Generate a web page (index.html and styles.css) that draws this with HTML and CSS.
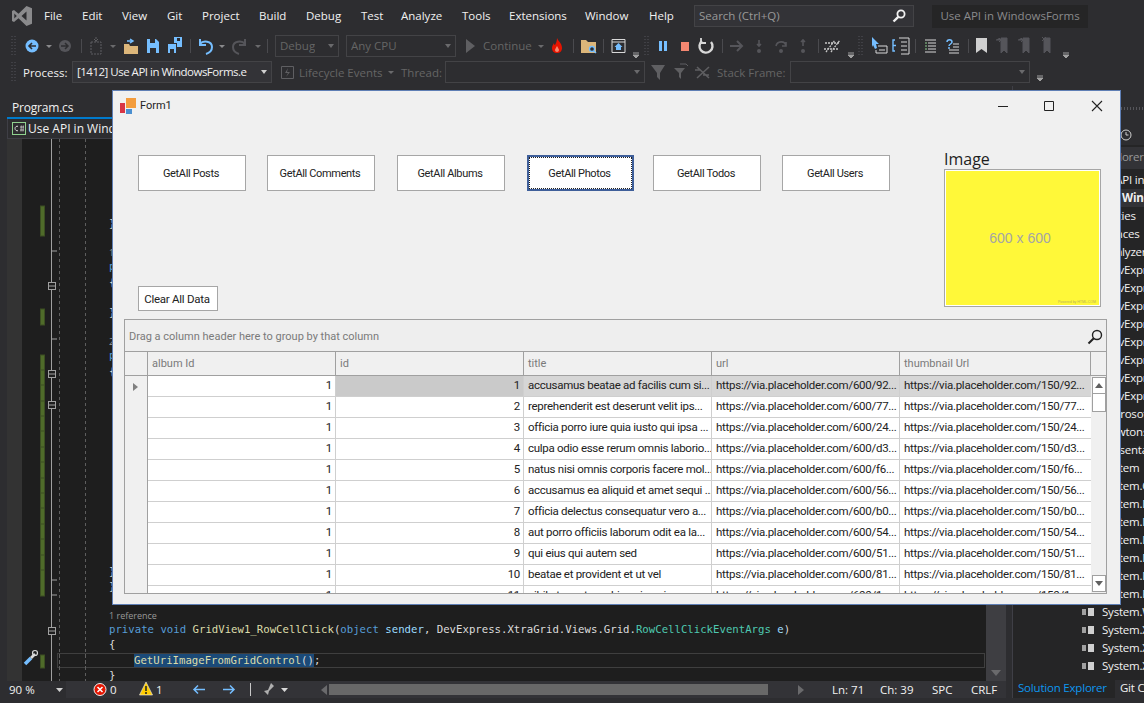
FILE: index.html
```html
<!DOCTYPE html>
<html lang="en">
<head>
<meta charset="utf-8">
<title>Use API in WindowsForms</title>
<link rel="stylesheet" href="styles.css">
</head>
<body>
<div class="shell">
  <header class="menubar">
    <svg class="logo" viewBox="0 0 20 20" width="20" height="20"><path fill="#8a8a8c" d="M14.5 0 20 2.3v15.4L14.5 20 6.5 12.3 2 16 0 15V5l2-1 4.500 3.700ZM14.500 5.500 9.500 10l5 4.500ZM2.300 7.500v5L4.800 10Z"/></svg>
    <nav class="menu"><span>File</span><span>Edit</span><span>View</span><span>Git</span><span>Project</span><span>Build</span><span>Debug</span><span>Test</span><span>Analyze</span><span>Tools</span><span>Extensions</span><span>Window</span><span>Help</span></nav>
    <div class="search"><span>Search (Ctrl+Q)</span>
      <svg viewBox="0 0 14 14" width="14" height="14"><circle cx="9" cy="5" r="3.600" fill="none" stroke="#f1f1f1" stroke-width="1.800"/><path d="M6.300 7.800 1.500 12.500" stroke="#f1f1f1" stroke-width="2.400"/></svg>
    </div>
    <div class="apptitle">Use API in WindowsForms</div>
  </header>

  <div class="toolbar">
    <svg class="tb-a" viewBox="10 32 265 28" width="265" height="28">
      <path d="M12 36v20M15 36v20" stroke="#55555a" stroke-dasharray="1 2"/>
      <circle cx="32" cy="46" r="6.500" fill="#75beff"/><path d="M36 46h-7m3-3-3 3 3 3" stroke="#2d2d30" stroke-width="1.600" fill="none"/>
      <path d="M46 45h6l-3 3z" fill="#8a8a8c"/>
      <circle cx="65" cy="46" r="6" fill="#55555a"/><path d="M61 46h7m-3-3 3 3-3 3" stroke="#2d2d30" stroke-width="1.500" fill="none"/>
      <path d="M81.500 39v14" stroke="#4a4a4e"/>
      <path d="M91 42h10v12H91z" fill="none" stroke="#5f5f62" stroke-dasharray="2 1"/><path d="M94 39l2 2 2-2M96 37v5" stroke="#5f5f62"/>
      <path d="M110 45h6l-3 3z" fill="#6a6a6c"/>
      <path d="M124 44h5l1 2h8v8h-14z" fill="#dcb67a"/><path d="M127 41h5m-2-2 3 2-3 2" stroke="#75beff" stroke-width="1.500" fill="none"/>
      <path d="M147 39h9l3 3v11h-12z" fill="#75beff"/><path d="M150 39h5v4h-5z" fill="#2d2d30"/><path d="M150 48h6v5h-6z" fill="#2d2d30"/>
      <path d="M168 44h8v9h-8z" fill="#75beff"/><path d="M174 37h8v10h-5v-4h-3z" fill="#75beff"/><path d="M170 49h4v4h-4z" fill="#2d2d30"/><path d="M177 38h3v3h-3z" fill="#2d2d30"/>
      <path d="M190.500 39v14" stroke="#4a4a4e"/>
      <path d="M200 39v6h6M200 44c3-4 12-3 12 3 0 4-3 6-6 7" fill="none" stroke="#75beff" stroke-width="2"/>
      <path d="M219 45h6l-3 3z" fill="#8a8a8c"/>
      <path d="M245 39v6h-6M245 44c-3-4-12-3-12 3 0 4 3 6 6 7" fill="none" stroke="#55555a" stroke-width="2"/>
      <path d="M255 45h6l-3 3z" fill="#6a6a6c"/>
      <path d="M267.500 39v14" stroke="#4a4a4e"/>
    </svg>
    <div class="combo dis w-debug"><span>Debug</span><i class="caret"></i></div>
    <div class="combo dis w-cpu"><span>Any CPU</span><i class="caret"></i></div>
    <svg class="tb-b" viewBox="456 32 27 28" width="27" height="28"><path d="M466 39l9 7-9 7z" fill="#5f5f62"/></svg>
    <span class="t-dis w-cont">Continue</span>
    <svg class="tb-c" viewBox="534 32 541 28" width="541" height="28">
      <path d="M538 45h6l-3 3z" fill="#6a6a6c"/>
      <path d="M557 38c1 3 5 5 5 10 0 3-2 5-5 5s-5-2-5-5c0-2 1-3 2-5 0 2 1 2 1 2 1-2 2-4 2-7z" fill="#e51400"/><path d="M557 46c1 2 2 3 2 4s-1 2-2 2-2-1-2-2 1-2 2-4z" fill="#f48771"/>
      <path d="M573.500 39v14" stroke="#4a4a4e"/>
      <path d="M581 40h5l2 2h8v11h-15z" fill="#dcb67a"/><circle cx="592" cy="49" r="2.500" fill="#2d2d30" stroke="#75beff" stroke-width="1.300"/><path d="M594 51l2 2" stroke="#75beff" stroke-width="1.400"/>
      <path d="M603.500 39v14" stroke="#4a4a4e"/>
      <path d="M612 39.500h13v13h-13z" fill="none" stroke="#d8d8d8"/><path d="M612 42h13" stroke="#d8d8d8"/><path d="M618.500 43l4 4h-1.500v3h-5v-3h-1.500z" fill="#75beff"/>
      <path d="M633 53h6M633 55l3 3 3-3z" stroke="#a0a0a0" fill="#a0a0a0"/>
      <path d="M645 36v20M648 36v20" stroke="#55555a" stroke-dasharray="1 2"/>
      <path d="M659 41h3v10h-3zM664 41h3v10h-3z" fill="#75beff"/>
      <path d="M681 42h8v9h-8z" fill="#f48771"/>
      <path d="M702 41a6.500 6.500 0 1 0 9 1" fill="none" stroke="#d8d8d8" stroke-width="2.400"/><path d="M701 38v5h5" fill="none" stroke="#d8d8d8" stroke-width="1.800"/>
      <path d="M722.500 39v14" stroke="#4a4a4e"/>
      <path d="M730 46h12m-5-5 5 5-5 5" stroke="#55555a" stroke-width="2" fill="none"/>
      <path d="M759 40v6m-2-2 2 2 2-2" stroke="#55555a" stroke-width="1.600" fill="none"/><circle cx="759" cy="51" r="2" fill="#55555a"/>
      <path d="M776 46c1-5 9-6 10 0m0-4v4h-4" stroke="#55555a" stroke-width="1.600" fill="none"/><circle cx="781" cy="51" r="2" fill="#55555a"/>
      <path d="M803 46v-6m-2 2 2-2 2 2" stroke="#55555a" stroke-width="1.600" fill="none"/><circle cx="803" cy="51" r="2" fill="#55555a"/>
      <path d="M818.500 39v14" stroke="#4a4a4e"/>
      <path d="M826 52l9-12M831 52l9-12M825 43h14M824 49h14" stroke="#c8c8c8" stroke-width="1.300" stroke-dasharray="2 1"/>
      <path d="M848 53h6M848 55l3 3 3-3z" stroke="#a0a0a0" fill="#a0a0a0"/>
      <path d="M859 36v20M862 36v20" stroke="#55555a" stroke-dasharray="1 2"/>
      <path d="M872 37l7 7h-3l1 4-2 1-2-4-1 2z" fill="#75beff"/><path d="M878 46h9v7h-11v-3M879 50h6" fill="none" stroke="#d8d8d8"/>
      <path d="M895 40h-2v11h2M893 45.500h3" fill="none" stroke="#75beff" stroke-width="1.400"/><path d="M899 38h10v16h-8M901 42h6M901 46h6M901 50h6" fill="none" stroke="#d8d8d8"/>
      <path d="M915.500 39v14" stroke="#4a4a4e"/>
      <path d="M925 40h11M928 43h8M928 46h8M928 49h8M925 52h11" stroke="#d8d8d8"/><path d="M925 43h2M925 46h2M925 49h2" stroke="#8fd18f"/>
      <path d="M947 42c0-3 5-3 5 0 0 2-3 2-3 4" fill="none" stroke="#75beff" stroke-width="1.500"/><circle cx="949" cy="48" r="1" fill="#75beff"/><path d="M953 44h6M953 47h6M949 50h10M949 53h10" stroke="#d8d8d8"/>
      <path d="M968.500 39v14" stroke="#4a4a4e"/>
      <path d="M976 38h11v15l-5.500-4-5.500 4z" fill="#d0d0d0"/>
      <path d="M1001 38h6v15l-3-3-3 3zM996 40h5l-2-2m2 2-2 2" fill="#55555a" stroke="#55555a"/>
      <path d="M1023 38h6v15l-3-3-3 3zM1018 40h5l-2-2m2 2-2 2" fill="#55555a" stroke="#55555a"/>
      <path d="M1044 38h6v15l-3-3-3 3zM1042 37l4 4m0-4-4 4" fill="#55555a" stroke="#55555a"/>
      <path d="M1063 53h6M1063 55l3 3 3-3z" stroke="#a0a0a0" fill="#a0a0a0"/>
    </svg>
  </div>

  <div class="toolbar row2">
    <svg viewBox="10 60 13 26" width="13" height="26"><path d="M12 62v21M15 62v21" stroke="#55555a" stroke-dasharray="1 2"/></svg>
    <span class="t-on w-proc">Process:</span>
    <div class="combo on w-pcombo"><span>[1412] Use API in WindowsForms.e</span><i class="caret"></i></div>
    <svg viewBox="272 60 27 26" width="27" height="26"><path d="M281.500 66.500h12v12h-12z" fill="none" stroke="#5f5f62"/><path d="M288 68l-3 5h3l-2 4 4-5h-3z" fill="#5f5f62"/></svg>
    <span class="t-dis w-life">Lifecycle Events</span>
    <svg viewBox="382 60 19 26" width="19" height="26"><path d="M388 71h6l-3 3z" fill="#6a6a6c"/></svg>
    <span class="t-dis w-thread">Thread:</span>
    <div class="combo dis w-thr"><span></span><i class="caret"></i></div>
    <svg viewBox="645 60 72 26" width="72" height="26">
      <path d="M651 65h14l-5 8v7l-3-3v-4z" fill="#5f5f62"/>
      <path d="M674 68h11l-4 5v6l-2-2v-4z" fill="#5f5f62"/><path d="M680 64h6l2 2" stroke="#5f5f62" fill="none"/>
      <path d="M697 67l12 11M709 67l-12 11M695 70h6M703 75h6" stroke="#5f5f62" stroke-width="1.600"/>
    </svg>
    <span class="t-dis w-stack">Stack Frame:</span>
    <div class="combo dis w-frame"><span></span><i class="caret"></i></div>
    <svg viewBox="1030 60 20 26" width="20" height="26"><path d="M1037 76h6M1037 78l3 3 3-3z" stroke="#a0a0a0" fill="#a0a0a0"/></svg>
  </div>

  <main class="workspace">
    <section class="doc">
      <div class="tabs"><span class="tab">Program.cs</span></div>
      <div class="crumb">
        <svg viewBox="0 0 14 13" width="14" height="13"><rect x=".5" y=".5" width="13" height="12" fill="#2d2d30" stroke="#8fd18f"/><path d="M6 4.300a2.300 2.300 0 1 0 0 4.400" fill="none" stroke="#d8d8d8"/><path d="M8 5h4M8 8h4M9.300 3.500 9 9.500M11.300 3.500l-.3 6" stroke="#d8d8d8" stroke-width=".7"/></svg>
        <span>Use API in WindowsForms</span>
      </div>
      <div class="editor">
        <svg class="gutter" viewBox="7 139 102 542" width="102" height="542">
          <rect x="7" y="139" width="15" height="542" fill="#333"/>
          <g fill="#4f6b2a" stroke="#3c4f22">
            <rect x="40.500" y="206" width="4" height="30"/>
            <rect x="40.500" y="309" width="4" height="16"/>
            <rect x="40.500" y="355" width="4" height="241"/>
            <rect x="40.500" y="655" width="4" height="13"/>
            <path d="M41 370h4M41 385h4M41 401h4M41 416h4M41 431h4M41 447h4M41 462h4M41 478h4M41 493h4M41 508h4M41 524h4M41 539h4M41 555h4M41 570h4" fill="none"/>
          </g>
          <path d="M51.500 139V681" stroke="#a0a0a0"/>
          <path d="M59.500 139V681M85.500 139V681" stroke="#5e5e5e" stroke-dasharray="3 3"/>
          <path d="M52 251h5M52 339h5M52 580h5M52 595h5" stroke="#a0a0a0"/>
          <g fill="#1e1e1e" stroke="#a0a0a0">
            <rect x="48.500" y="282.500" width="7" height="7"/>
            <rect x="48.500" y="370.500" width="7" height="7"/>
            <rect x="48.500" y="401.500" width="7" height="7"/>
            <rect x="48.500" y="627.500" width="7" height="7"/>
          </g>
          <path d="M49 286h6M49 374h6M49 405h6M49 631h6" stroke="#a0a0a0"/>
          <path d="M57 653.500h52M57 667.500h52M57.500 653v15" stroke="#3f3f3f" fill="none"/>
          <path d="M59.500 654V668M85.500 654V668" stroke="#5e5e5e" stroke-dasharray="3 3"/>
          <path d="M25 664l6-6" stroke="#75beff" stroke-width="3.500"/><path d="M31 658l4-4" stroke="#d8d8d8" stroke-width="2.600"/><circle cx="35" cy="653" r="2.500" fill="none" stroke="#d8d8d8" stroke-width="1.200"/>
        </svg>
        <div class="code">
          <div class="ln"><span class="tx">}</span></div>
          <div class="ln"></div>
          <div class="lens">1 reference</div>
          <div class="ln"><span class="kw">private void</span> <span class="fn">GetAllPosts_Click</span><span class="tx">(</span><span class="kw">object</span> <span class="pr">sender</span><span class="tx">, EventArgs e)</span></div>
          <div class="ln"><span class="tx">{</span></div>
          <div class="ln"></div>
          <div class="ln"><span class="tx">}</span></div>
          <div class="ln"></div>
          <div class="lens">2 references</div>
          <div class="ln"><span class="kw">private void</span> <span class="fn">GetUriImageFromGridControl</span><span class="tx">()</span></div>
          <div class="ln"><span class="tx">{</span></div>
          <div class="ln"></div><div class="ln"></div><div class="ln"></div><div class="ln"></div><div class="ln"></div><div class="ln"></div>
          <div class="ln"></div><div class="ln"></div><div class="ln"></div><div class="ln"></div><div class="ln"></div><div class="ln"></div>
          <div class="ln"><span class="tx">}</span></div>
          <div class="ln"><span class="tx">}</span></div>
          <div class="ln"></div>
          <div class="lens">1 reference</div>
          <div class="ln"><span class="kw">private void</span> <span class="fn">GridView1_RowCellClick</span><span class="tx">(</span><span class="kw">object</span> <span class="pr">sender</span><span class="tx">, DevExpress.XtraGrid.Views.Grid.</span><span class="ty">RowCellClickEventArgs</span> <span class="pr">e</span><span class="tx">)</span></div>
          <div class="ln"><span class="tx">{</span></div>
          <div class="ln cur"><span class="indent"></span><span class="sel"><span class="fn">GetUriImageFromGridControl</span><span class="tx">()</span></span><span class="tx">;</span></div>
          <div class="ln"><span class="tx">}</span></div>
        </div>
        <div class="vscroll"><svg viewBox="0 0 20 8" width="20" height="8"><path d="M5 1h10l-5 6z" fill="#6a6a6c"/></svg></div>
      </div>
      <footer class="status">
        <div class="zoomc"><span>90 %</span><svg viewBox="0 0 7 4" width="7" height="4"><path d="M0 0h7L3.500 4z" fill="#d0d0d0"/></svg></div>
        <svg viewBox="66 681 44 17" width="44" height="17">
          <circle cx="100" cy="689.500" r="6" fill="#e51400" stroke="#f1f1f1"/><path d="M97.500 687l5 5m0-5-5 5" stroke="#fff" stroke-width="1.500"/>
        </svg>
        <span class="st w-zero">0</span>
        <svg viewBox="138 681 18 17" width="18" height="17">
          <path d="M146 682l6.500 13h-13z" fill="#ffcc00" stroke="#f1f1f1" stroke-width=".6"/><path d="M146 686v5M146 692v2" stroke="#1e1e1e" stroke-width="1.500"/>
        </svg>
        <span class="st w-one">1</span>
        <svg viewBox="170 681 150 17" width="150" height="17">
          <path d="M205 689.500h-11m4-4-4 4 4 4" fill="none" stroke="#75beff" stroke-width="1.500"/>
          <path d="M223 689.500h11m-4-4 4 4-4 4" fill="none" stroke="#75beff" stroke-width="1.500"/>
          <path d="M250.500 683v13" stroke="#c8c8c8"/>
          <path d="M271 683l3 3-5 5-1 4-3-3-1-1 4-1z" fill="#b0b0b0"/><path d="M281 688h7l-3.500 4z" fill="#d8d8d8"/>
        </svg>
        <svg viewBox="0 0 8 10" width="8" height="10" class="hl"><path d="M7 0v10L1 5z" fill="#6a6a6c"/></svg>
        <div class="hthumb"></div>
        <svg viewBox="0 0 8 10" width="8" height="10" class="hr"><path d="M1 0v10l6-5z" fill="#6a6a6c"/></svg>
        <span class="st w-ln">Ln: 71</span><span class="st w-ch">Ch: 39</span><span class="st w-spc">SPC</span><span class="st">CRLF</span>
      </footer>
    </section>

    <aside class="panel">
      <div class="ptitle"><div class="pgrip"></div><svg viewBox="0 0 12 12" width="12" height="12"><circle cx="6" cy="6" r="5" fill="none" stroke="#d0d0d0"/><path d="M6 3v3h2.500" fill="none" stroke="#d0d0d0"/></svg></div>
      <div class="psearch">Search Solution Explorer</div>
      <div class="tree">
        <div class="r l0">Solution 'Use API in WindowsForms'</div>
        <div class="r l1 cur-r">Use API in WindowsForms</div>
        <div class="r l2">Properties</div>
        <div class="r l2">References</div>
        <div class="r l3">Analyzers</div>
        <div class="r l3 dx">DevExpress.BonusSkins</div>
        <div class="r l3 dx">DevExpress.Data</div>
        <div class="r l3 dx">DevExpress.Printing</div>
        <div class="r l3 dx">DevExpress.Sparkline</div>
        <div class="r l3 dx">DevExpress.Utils</div>
        <div class="r l3 dx">DevExpress.XtraBars</div>
        <div class="r l3 dx">DevExpress.XtraEditors</div>
        <div class="r l3 dx">DevExpress.XtraGrid</div>
        <div class="r l3">Microsoft.CSharp</div>
        <div class="r l3">Newtonsoft.Json</div>
        <div class="r l3">PresentationCore</div>
        <div class="r l3">System</div>
        <div class="r l3">System.Core</div>
        <div class="r l3">System.Data</div>
        <div class="r l3">System.Deployment</div>
        <div class="r l3">System.Design</div>
        <div class="r l3">System.Drawing</div>
        <div class="r l3">System.Net.Http</div>
        <div class="r l3">System.Runtime</div>
        <div class="r l3 ref">System.Windows</div>
        <div class="r l3 ref">System.Xaml</div>
        <div class="r l3 ref">System.Xml</div>
        <div class="r l3 ref">System.Xml.Linq</div>
      </div>
      <div class="ptabs"><span class="pt active">Solution Explorer</span><span class="pt">Git Changes</span></div>
    </aside>
  </main>
</div>

<div class="form">
  <div class="ftitle">
    <svg viewBox="0 0 16 16" width="16" height="16"><rect x="0" y="5" width="5" height="10" fill="#d83545"/><rect x="6" y="0" width="10" height="10" fill="#f39c3d"/><rect x="6" y="11" width="6" height="5" fill="#4a8fd0"/></svg>
    <span class="fname">Form1</span>
    <svg class="wbtn" viewBox="0 0 112 12" width="112" height="12"><path d="M0 6.500h10" stroke="#222"/><path d="M46.500 1.500h9v9h-9z" fill="none" stroke="#222"/><path d="M94 1l10 10m0-10L94 11" stroke="#222" stroke-width="1.100"/></svg>
  </div>
  <div class="fmain">
    <div class="fleft">
      <div class="btns">
        <button class="btn">GetAll Posts</button>
        <button class="btn">GetAll Comments</button>
        <button class="btn">GetAll Albums</button>
        <button class="btn focus">GetAll Photos</button>
        <button class="btn">GetAll Todos</button>
        <button class="btn">GetAll Users</button>
      </div>
      <button class="btn clear">Clear All Data</button>
    </div>
    <div class="fimg">
      <div class="imglabel">Image</div>
      <div class="imgbox"><div class="yellow"><span>600 x 600</span><small>Powered by HTML.COM</small></div></div>
    </div>
  </div>
  <div class="grid">
    <div class="group"><span>Drag a column header here to group by that column</span>
      <svg viewBox="0 0 16 16" width="16" height="16"><circle cx="10" cy="6" r="4.500" fill="none" stroke="#222" stroke-width="1.400"/><path d="M6.800 9.200 1.500 14.500" stroke="#222" stroke-width="2"/></svg>
    </div>
    <div class="ghead"><span></span><span>album Id</span><span>id</span><span>title</span><span>url</span><span>thumbnail Url</span><span></span></div>
    <div class="gbody">
      <table class="tbl">
        <tbody>
          <tr class="selrow"><th><svg viewBox="0 0 5 8" width="5" height="8"><path d="M0 0l5 4-5 4z" fill="#808080"/></svg></th><td class="n first">1</td><td class="n focus-c">1</td><td>accusamus beatae ad facilis cum si...</td><td class="u">https://via.placeholder.com/600/92...</td><td class="u">https://via.placeholder.com/150/92...</td></tr>
          <tr><th></th><td class="n">1</td><td class="n">2</td><td>reprehenderit est deserunt velit ips...</td><td class="u">https://via.placeholder.com/600/77...</td><td class="u">https://via.placeholder.com/150/77...</td></tr>
          <tr><th></th><td class="n">1</td><td class="n">3</td><td>officia porro iure quia iusto qui ipsa ...</td><td class="u">https://via.placeholder.com/600/24...</td><td class="u">https://via.placeholder.com/150/24...</td></tr>
          <tr><th></th><td class="n">1</td><td class="n">4</td><td>culpa odio esse rerum omnis laborio...</td><td class="u">https://via.placeholder.com/600/d3...</td><td class="u">https://via.placeholder.com/150/d3...</td></tr>
          <tr><th></th><td class="n">1</td><td class="n">5</td><td>natus nisi omnis corporis facere mol...</td><td class="u">https://via.placeholder.com/600/f6...</td><td class="u">https://via.placeholder.com/150/f6...</td></tr>
          <tr><th></th><td class="n">1</td><td class="n">6</td><td>accusamus ea aliquid et amet sequi ...</td><td class="u">https://via.placeholder.com/600/56...</td><td class="u">https://via.placeholder.com/150/56...</td></tr>
          <tr><th></th><td class="n">1</td><td class="n">7</td><td>officia delectus consequatur vero a...</td><td class="u">https://via.placeholder.com/600/b0...</td><td class="u">https://via.placeholder.com/150/b0...</td></tr>
          <tr><th></th><td class="n">1</td><td class="n">8</td><td>aut porro officiis laborum odit ea la...</td><td class="u">https://via.placeholder.com/600/54...</td><td class="u">https://via.placeholder.com/150/54...</td></tr>
          <tr><th></th><td class="n">1</td><td class="n">9</td><td>qui eius qui autem sed</td><td class="u">https://via.placeholder.com/600/51...</td><td class="u">https://via.placeholder.com/150/51...</td></tr>
          <tr><th></th><td class="n">1</td><td class="n">10</td><td>beatae et provident et ut vel</td><td class="u">https://via.placeholder.com/600/81...</td><td class="u">https://via.placeholder.com/150/81...</td></tr>
          <tr><th></th><td class="n">1</td><td class="n">11</td><td>nihil at amet non hic quia qui</td><td class="u">https://via.placeholder.com/600/1e...</td><td class="u">https://via.placeholder.com/150/1e...</td></tr>
        </tbody>
      </table>
      <div class="gscroll">
        <div class="sbtn"><svg viewBox="0 0 8 5" width="8" height="5"><path d="M4 0l4 5H0z" fill="#606060"/></svg></div>
        <div class="sthumb"></div>
        <div class="strack"></div>
        <div class="sbtn"><svg viewBox="0 0 8 5" width="8" height="5"><path d="M0 0h8L4 5z" fill="#606060"/></svg></div>
      </div>
    </div>
  </div>
</div>
</body>
</html>
```

FILE: styles.css
```css
* { box-sizing: border-box; }
html, body { margin: 0; height: 100%; overflow: hidden; }
body { width: 1144px; height: 703px; background: #2d2d30; font: 12px "Open Sans", "Noto Sans", sans-serif; color: #f1f1f1; position: relative; }
svg { display: block; flex: none; }
.shell { display: flex; flex-direction: column; height: 703px; }

.menubar { display: flex; align-items: center; height: 32px; flex: none; padding-left: 12px; }
.logo { margin-right: 12px; }
.menu { display: grid; grid-template-columns: 38px 40px 45px 35px 57px 47px 55px 40px 61px 47px 76px 64px 45px; font-size: 11.500px; padding-bottom: 2px; }
.search { display: flex; align-items: center; justify-content: space-between; width: 220px; height: 22px; background: #333337; border: 1px solid #434346; padding: 0 7px 0 4px; color: #999; font-size: 11.500px; }
.search span { padding-bottom: 2px; }
.apptitle { margin-left: 18px; width: 156px; height: 23px; line-height: 21px; background: #252526; color: #8a8a8c; text-align: center; font-size: 11.500px; }

.toolbar { display: flex; align-items: center; height: 28px; flex: none; padding-left: 10px; font-size: 11.500px; }
.row2 { height: 26px; }
.row2 > .combo, .row2 > span { margin-bottom: 2px; }
.combo { display: flex; align-items: center; justify-content: space-between; height: 22px; border: 1px solid #434346; padding: 0 4px 0 4px; overflow: hidden; white-space: nowrap; }
.combo.dis { color: #656565; }
.combo.on { background: #333337; color: #f1f1f1; letter-spacing: -.5px; }
.combo span { overflow: hidden; padding-bottom: 2px; }
.caret { flex: none; width: 0; height: 0; border: 3px solid transparent; border-top: 4px solid #6a6a6c; border-bottom: 0; }
.on .caret { border-top-color: #d0d0d0; }
.w-debug { width: 64px; margin-right: 7px; }
.w-cpu { width: 110px; }
.w-cont { width: 51px; padding-bottom: 2px; }
.t-dis { color: #656565; white-space: nowrap; }
.t-on { color: #f1f1f1; }
.w-proc { width: 49px; }
.w-pcombo { width: 200px; }
.w-life { width: 83px; }
.w-thread { width: 44px; }
.w-thr { width: 200px; }
.w-stack { width: 73px; }
.w-frame { width: 240px; }

.workspace { display: flex; height: 612px; flex: none; }
.doc { display: flex; flex-direction: column; width: 999px; margin-left: 7px; flex: none; }
.tabs { height: 33px; display: flex; align-items: flex-end; border-bottom: 2px solid #007acc; flex: none; }
.tab { padding: 0 5px 1px 5px; font-size: 12px; letter-spacing: -.2px; }
.crumb { height: 20px; display: flex; align-items: center; gap: 2px; padding-left: 4px; background: #2d2d30; border: 1px solid #3f3f46; border-top: 0; flex: none; white-space: nowrap; font-size: 12px; }
.editor { display: flex; flex: 1; min-height: 0; background: #1e1e1e; overflow: hidden; }
.gutter { flex: none; }
.code { flex: 1; min-width: 0; display: flex; flex-direction: column; justify-content: flex-end; margin-bottom: -2px; font: 10.680px/15.400px "DejaVu Sans Mono", "Liberation Mono", monospace; white-space: pre; }
.ln { height: 15.400px; flex: none; padding-left: 0; }
.lens { height: 12px; line-height: 12px; flex: none; font: 9px/12px "Open Sans", sans-serif; color: #999; }
.cur { height: 15px; border: 1px solid #3f3f3f; border-left: 0; line-height: 13px; margin-right: 1px; }
.indent { display: inline-block; width: 25px; }
.sel { background: #1b4a78; display: inline-block; height: 13px; }
.kw { color: #569cd6; }
.fn { color: #dcdcaa; }
.tx { color: #dcdcdc; }
.pr { color: #9cdcfe; }
.ty { color: #4ec9b0; }
.vscroll { width: 20px; flex: none; background: #3e3e42; display: flex; align-items: flex-end; padding-bottom: 4px; }

.status { height: 17px; flex: none; display: flex; align-items: center; background: #333337; font-size: 11.500px; white-space: nowrap; }
.zoomc { width: 59px; height: 17px; background: #2d2d30; display: flex; align-items: center; justify-content: space-between; padding-left: 2px; padding-right: 3px; flex: none; }
.hl { margin-right: 1px; }
.hthumb { width: 439px; height: 11px; background: #686868; flex: none; }
.hr { margin-left: 29px; margin-right: 27px; }
.st { flex: none; padding-bottom: 1px; }
.w-zero { width: 28px; }
.w-one { width: 14px; }
.w-ln { width: 48px; }
.w-ch { width: 52px; }
.w-spc { width: 39px; }

.panel { width: 132px; margin-left: 6px; flex: none; background: #252526; border-left: 1px solid #3f3f46; display: flex; flex-direction: column; overflow: hidden; white-space: nowrap; font-size: 11.500px; letter-spacing: -.2px; }
.ptitle { height: 59px; flex: none; display: flex; flex-direction: column; justify-content: flex-end; padding: 0 0 4px 107px; background: #2d2d30; position: relative; }
.pgrip { position: absolute; left: 108px; right: 0; top: 21px; height: 3px; background: repeating-linear-gradient(90deg, #55555a 0 1px, transparent 1px 3px); }
.psearch { height: 22px; flex: none; line-height: 20px; padding-left: 4px; background: #333337; color: #999; margin-top: 2px; }
.tree { flex: 1; min-height: 0; padding-top: 2px; overflow: hidden; }
.r { height: 18px; line-height: 17px; position: relative; }
.l0 { padding-left: 32px; }
.l1 { padding-left: 51px; font-weight: 700; }
.cur-r { background: #333337; }
.l2 { padding-left: 69px; }
.l3 { padding-left: 89px; }
.l3.dx { padding-left: 91px; }
.ref::before { content: ""; position: absolute; left: 69px; top: 6px; width: 4px; height: 6px; background: #a0a0a0; box-shadow: 7px 0 0 1px #d0d0d0; }
.ptabs { height: 18px; flex: none; display: flex; margin-top: auto; }
.pt { padding: 0 5px; line-height: 16px; background: #2d2d30; border-right: 1px solid #3f3f46; }
.pt.active { background: #252526; color: #0e97f0; border-right: 0; padding-right: 8px; }

.form { position: absolute; left: 112px; top: 90px; width: 1009px; height: 515px; background: #f0f0f0; border: 1px solid #5f7fb5; color: #1e1e1e; display: flex; flex-direction: column; font-family: Roboto, "Open Sans", sans-serif; font-size: 11px; overflow: hidden; }
.ftitle { height: 30px; flex: none; display: flex; align-items: center; padding-left: 7px; gap: 4px; }
.fname { color: #222; flex: 1; font-size: 11px; padding-bottom: 1px; }
.wbtn { margin-right: 10px; }
.fmain { display: flex; height: 191px; flex: none; padding-left: 25px; padding-top: 29px; }
.fleft { width: 806px; flex: none; padding-top: 5px; }
.btns { display: grid; grid-template-columns: 129px 130px 130px 126px 129px 108px; }
.btn { width: 108px; height: 36px; background: #fff; border: 1px solid #a6a6a6; font: inherit; letter-spacing: -.35px; color: #222; padding: 0 2px 0 0; border-radius: 0; display: block; }
.btn.focus { width: 107px; border: 2px solid #3f5f9a; outline: 1px dotted #222; outline-offset: -3px; }
.clear { width: 80px; height: 25px; margin-top: 95px; font-size: 11.500px; letter-spacing: -.25px; }
.fimg { width: 157px; flex: none; }
.imglabel { height: 19px; font: 16px/18px "Open Sans", sans-serif; }
.imgbox { height: 138px; border: 1px solid #a6a6a6; background: #fff; padding: 1px; }
.yellow { height: 134px; background: #fff839; position: relative; display: flex; align-items: center; justify-content: center; color: #a5a5a5; font: 14px "Liberation Sans", sans-serif; padding-right: 5px; }
.yellow small { position: absolute; right: 3px; bottom: 1px; font-size: 3.500px; color: #b9b25e; }

.grid { margin-left: 11px; margin-top: 7px; width: 983px; height: 275px; border: 1px solid #a0a0a0; background: #eee; overflow: hidden; flex: none; display: flex; flex-direction: column; }
.group { height: 32px; flex: none; display: flex; align-items: center; justify-content: space-between; padding: 2px 3px 0 4px; color: #7a7a7a; font-size: 11px; border-bottom: 1px solid #a0a0a0; }
.ghead { height: 24px; flex: none; display: grid; grid-template-columns: 23px 188px 188px 188px 188px 191px 15px; background: #f0f0f0; color: #7a7a7a; line-height: 23px; border-bottom: 1px solid #a0a0a0; font-size: 11px; }
.ghead span { padding-left: 4px; border-right: 1px solid #a0a0a0; }
.ghead span:last-child { border-right: 0; }
.gbody { display: flex; flex: 1; min-height: 0; }
.tbl { table-layout: fixed; width: 966px; border-collapse: separate; border-spacing: 0; flex: none; height: 231px; }
.tbl th { width: 23px; background: #f0f0f0; border-right: 1px solid #a0a0a0; padding: 0 0 0 8px; font-weight: 400; }
.tbl td { width: 188px; height: 21px; padding: 0 0 2px 4px; background: #fff; border-right: 1px solid #cfcfcf; border-bottom: 1px solid #cfcfcf; white-space: nowrap; overflow: hidden; color: #222; font-size: 11.500px; letter-spacing: -.28px; }
.tbl td:last-child { width: 191px; border-right: 0; }
.tbl td.n { text-align: right; padding: 0 3px 2px 0; }
.tbl td.u { letter-spacing: -.27px; }
.selrow td { background: #d6d6d6; }
.selrow td.first { background: #fff; }
.selrow td.focus-c { background: #cacaca; }
.gscroll { width: 15px; flex: none; display: flex; flex-direction: column; padding: 1px 0 1px 1px; background: #f0f0f0; }
.sbtn { height: 17px; flex: none; background: #fff; border: 1px solid #a0a0a0; display: flex; align-items: center; justify-content: center; }
.sthumb { height: 18px; flex: none; background: #fff; border: 1px solid #a0a0a0; border-top: 0; }
.strack { flex: 1; }
```
